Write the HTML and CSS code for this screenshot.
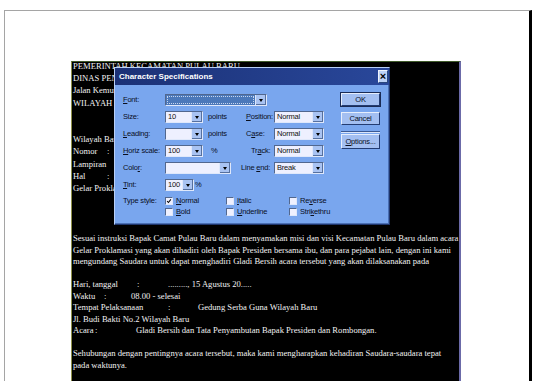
FILE: index.html
```html
<!DOCTYPE html>
<html>
<head>
<meta charset="utf-8">
<link rel="stylesheet" href="styles.css">
</head>
<body>
<div class="page">
  <div class="doc">
    <div class="head">
      <p>PEMERINTAH KECAMATAN PULAU BARU</p>
      <p>DINAS PENDIDIKAN DAN KEBUDAYAAN</p>
      <p>Jalan Kemuning No. 12 Pulau Baru</p>
      <p>WILAYAH PULAU BARU</p>
      <p>&nbsp;</p>
      <p>&nbsp;</p>
      <p>Wilayah Baru, 10 Agustus 20....</p>
      <p><span class="w-nomor">Nomor</span>:</p>
      <p>Lampiran</p>
      <p><span class="w-nomor">Hal</span>:</p>
      <p>Gelar Proklamasi</p>
    </div>
    <div class="text">
      <p>Sesuai instruksi Bapak Camat Pulau Baru dalam menyamakan misi dan visi Kecamatan Pulau Baru dalam acara</p>
      <p>Gelar Proklamasi yang akan dihadiri oleh Bapak Presiden bersama ibu, dan para pejabat lain, dengan ini kami</p>
      <p>mengundang Saudara untuk dapat menghadiri Gladi Bersih acara tersebut yang akan dilaksanakan pada</p>
      <p>&nbsp;</p>
      <p><span class="w-hari">Hari, tanggal</span><span class="w-c31">:</span>........., 15 Agustus 20.....</p>
      <p><span class="w-waktu">Waktu</span><span class="w-c27">:</span>08.00 - selesai</p>
      <p><span class="w-tempat">Tempat Pelaksanaan</span><span class="w-c30">:</span>Gedung Serba Guna Wilayah Baru</p>
      <p>Jl. Budi Bakti No.2 Wilayah Baru</p>
      <p><span class="w-acara">Acara</span><span class="w-c41">:</span>Gladi Bersih dan Tata Penyambutan Bapak Presiden dan Rombongan.</p>
      <p>&nbsp;</p>
      <p>Sehubungan dengan pentingnya acara tersebut, maka kami mengharapkan kehadiran Saudara-saudara tepat</p>
      <p>pada waktunya.</p>
    </div>

    <div class="dialog">
      <div class="titlebar">
        <span class="title">Character Specifications</span>
        <span class="close">×</span>
      </div>
      <div class="dbody">
        <div class="fields">
          <div class="row">
            <span class="lbl"><u>F</u>ont:</span>
            <span class="combo combo-font"><span class="val"></span><span class="dd"></span></span>
          </div>
          <div class="row">
            <span class="lbl">Size:</span>
            <span class="combo combo-s"><span class="val">10</span><span class="dd"></span></span>
            <span class="unit">points</span>
            <span class="rlbl"><u>P</u>osition:</span>
            <span class="combo combo-r"><span class="val">Normal</span><span class="dd"></span></span>
          </div>
          <div class="row">
            <span class="lbl"><u>L</u>eading:</span>
            <span class="combo combo-s"><span class="val"></span><span class="dd"></span></span>
            <span class="unit">points</span>
            <span class="rlbl">C<u>a</u>se:</span>
            <span class="combo combo-r"><span class="val">Normal</span><span class="dd"></span></span>
          </div>
          <div class="row">
            <span class="lbl"><u>H</u>oriz scale:</span>
            <span class="combo combo-s"><span class="val">100</span><span class="dd"></span></span>
            <span class="unit unit-pct">%</span>
            <span class="rlbl rlbl-track">Tr<u>a</u>ck:</span>
            <span class="combo combo-r"><span class="val">Normal</span><span class="dd"></span></span>
          </div>
          <div class="row">
            <span class="lbl">Colo<u>r</u>:</span>
            <span class="combo combo-c"><span class="val"></span><span class="dd"></span></span>
            <span class="rlbl rlbl-end">Line <u>e</u>nd:</span>
            <span class="combo combo-r"><span class="val">Break</span><span class="dd"></span></span>
          </div>
          <div class="row">
            <span class="lbl"><u>T</u>int:</span>
            <span class="combo combo-t"><span class="val">100</span><span class="dd"></span></span>
            <span class="pct">%</span>
          </div>
          <div class="row row-chk row-first">
            <span class="lbl">Type style:</span>
            <span class="chk chk-a"><span class="box"><svg viewBox="0 0 8 8" width="8" height="8"><polyline points="1.5,4 3.2,6 6.5,1.8" fill="none" stroke="#000" stroke-width="1.4"/></svg></span><span class="ct"><u>N</u>ormal</span></span>
            <span class="chk chk-b"><span class="box"></span><span class="ct"><u>I</u>talic</span></span>
            <span class="chk"><span class="box"></span><span class="ct">Re<u>v</u>erse</span></span>
          </div>
          <div class="row row-chk">
            <span class="lbl"></span>
            <span class="chk chk-a"><span class="box"></span><span class="ct"><u>B</u>old</span></span>
            <span class="chk chk-b"><span class="box"></span><span class="ct"><u>U</u>nderline</span></span>
            <span class="chk"><span class="box"></span><span class="ct">Stri<u>k</u>ethru</span></span>
          </div>
        </div>
        <div class="buttons">
          <span class="btn btn-ok">OK</span>
          <span class="btn btn-cancel">Cancel</span>
          <span class="sep"></span>
          <span class="btn btn-opt"><u>O</u>ptions...</span>
        </div>
      </div>
    </div>
  </div>
</div>
</body>
</html>
```
FILE: styles.css
```css
html, body {
  margin: 0;
  padding: 0;
  background: #ffffff;
  overflow: hidden;
  height: 381px;
}

.page {
  margin: 10px 0 0 4px;
  width: 528px;
  height: 420px;
  background: #ffffff;
  border-top: 1px solid #a5a5a5;
  border-left: 1px solid #a5a5a5;
  border-right: 3px solid #000000;
  padding-top: 50px;
  box-sizing: border-box;
}

.doc {
  position: relative;
  margin-left: 66px;
  width: 390px;
  height: 340px;
  background: #000000;
  border-top: 1px solid #3f5a2a;
  border-left: 1px solid #8e9048;
  border-right: 2px solid #6b6aa8;
  box-sizing: border-box;
  overflow: hidden;
  color: #f2f2f2;
  font-family: "Liberation Serif", "Times New Roman", serif;
  font-size: 8.6px;
  padding-left: 1px;
}

.doc p {
  margin: 0;
  white-space: nowrap;
}

.head {
  line-height: 12.2px;
  margin-top: -2px;
}

.text {
  position: absolute;
  left: 1px;
  top: 171px;
  line-height: 11.5px;
}

.w-nomor { display: inline-block; width: 34px; }
.w-hari { display: inline-block; width: 64px; }
.w-c31 { display: inline-block; width: 31px; }
.w-waktu { display: inline-block; width: 31px; }
.w-c27 { display: inline-block; width: 27px; }
.w-tempat { display: inline-block; width: 95px; }
.w-c30 { display: inline-block; width: 30px; }
.w-acara { display: inline-block; width: 22px; }
.w-c41 { display: inline-block; width: 41px; }

/* dialog */
.dialog {
  position: absolute;
  left: 42px;
  top: 5px;
  width: 276px;
  height: 158px;
  box-sizing: border-box;
  background: #79a6ee;
  border: 1px solid;
  border-color: #b9d0f7 #1f356b #1f356b #b9d0f7;
  box-shadow: inset -1px -1px 0 #4a6fb3;
  font-family: "Liberation Sans", Arial, sans-serif;
  font-size: 7.5px;
  letter-spacing: -0.2px;
  color: #0a0f1e;
}

.dialog u {
  text-underline-offset: 1px;
}

.titlebar {
  height: 17px;
  display: flex;
  align-items: center;
  justify-content: space-between;
  padding: 0 1px 0 4px;
  background: linear-gradient(to right, #1b3176, #29479a);
}

.title {
  color: #ffffff;
  font-weight: bold;
  font-size: 8px;
  letter-spacing: 0;
}

.close {
  width: 10px;
  height: 13px;
  box-sizing: border-box;
  background: #bcd1f6;
  border: 1px solid;
  border-color: #eef3fd #2b477e #2b477e #eef3fd;
  font-weight: bold;
  font-size: 11px;
  line-height: 10px;
  letter-spacing: 0;
  text-align: center;
  color: #000;
}

.dbody {
  display: flex;
  padding-left: 8px;
}

.fields {
  width: 202px;
  padding-top: 6px;
}

.row {
  display: flex;
  align-items: center;
  height: 17px;
}

.row-chk {
  height: 11px;
}

.row-first {
  margin-top: 2px;
}

.lbl {
  width: 42px;
  flex: none;
}

.combo {
  display: flex;
  flex: none;
  height: 12px;
  box-sizing: border-box;
  background: #eef0ff;
  border: 1px solid;
  border-color: #51678f #dfe8fb #dfe8fb #51678f;
}

.combo .val {
  flex: 1;
  padding-left: 2px;
  line-height: 10px;
  color: #111;
}

.combo .dd {
  position: relative;
  width: 10px;
  flex: none;
  background: #a9c3f2;
  border-left: 1px solid #dfe8fb;
  box-shadow: inset -1px -1px 0 #56709e;
}

.combo .dd::after {
  content: "";
  position: absolute;
  left: 3px;
  top: 4px;
  border-left: 2.5px solid transparent;
  border-right: 2.5px solid transparent;
  border-top: 3px solid #000;
}

.combo-font { width: 102px; }
.combo-font .val {
  background: #4b78ba;
  outline: 1px dotted #c9d6ee;
  outline-offset: -2px;
}
.combo-s { width: 38px; }
.combo-c { width: 66px; }
.combo-t { width: 29px; }
.combo-r { width: 50px; }

.unit {
  width: 38px;
  flex: none;
  padding-left: 5px;
}

.unit-pct {
  padding-left: 8px;
  width: 35px;
}

.pct {
  padding-left: 1px;
}

.rlbl {
  width: 28px;
  flex: none;
}

.rlbl-track {
  padding-left: 5px;
  width: 23px;
}

.rlbl-end {
  margin-left: 10px;
  width: 33px;
}

.chk {
  display: flex;
  align-items: center;
  gap: 3px;
  flex: none;
}

.chk-a { width: 61px; }
.chk-b { width: 63px; }

.box {
  width: 8px;
  height: 8px;
  box-sizing: border-box;
  background: #eef0ff;
  border: 1px solid;
  border-color: #51678f #dfe8fb #dfe8fb #51678f;
  display: flex;
  align-items: center;
  justify-content: center;
}

.box svg { display: block; }

.buttons {
  margin-left: 16px;
  width: 39px;
  padding-top: 8px;
  display: flex;
  flex-direction: column;
}

.btn {
  box-sizing: border-box;
  background: #a3bff1;
  border: 1px solid;
  border-color: #e6eefc #233c72 #233c72 #e6eefc;
  text-align: center;
}

.btn-ok {
  height: 13px;
  line-height: 11px;
  outline: 1px solid #1a2b55;
}

.btn-cancel {
  margin-top: 6px;
  height: 13px;
  line-height: 11px;
}

.sep {
  margin-top: 6px;
  height: 2px;
  border-top: 1px solid #3c5a94;
  border-bottom: 1px solid #dbe6fb;
  box-sizing: border-box;
}

.btn-opt {
  margin-top: 1px;
  height: 15px;
  line-height: 13px;
}
```
